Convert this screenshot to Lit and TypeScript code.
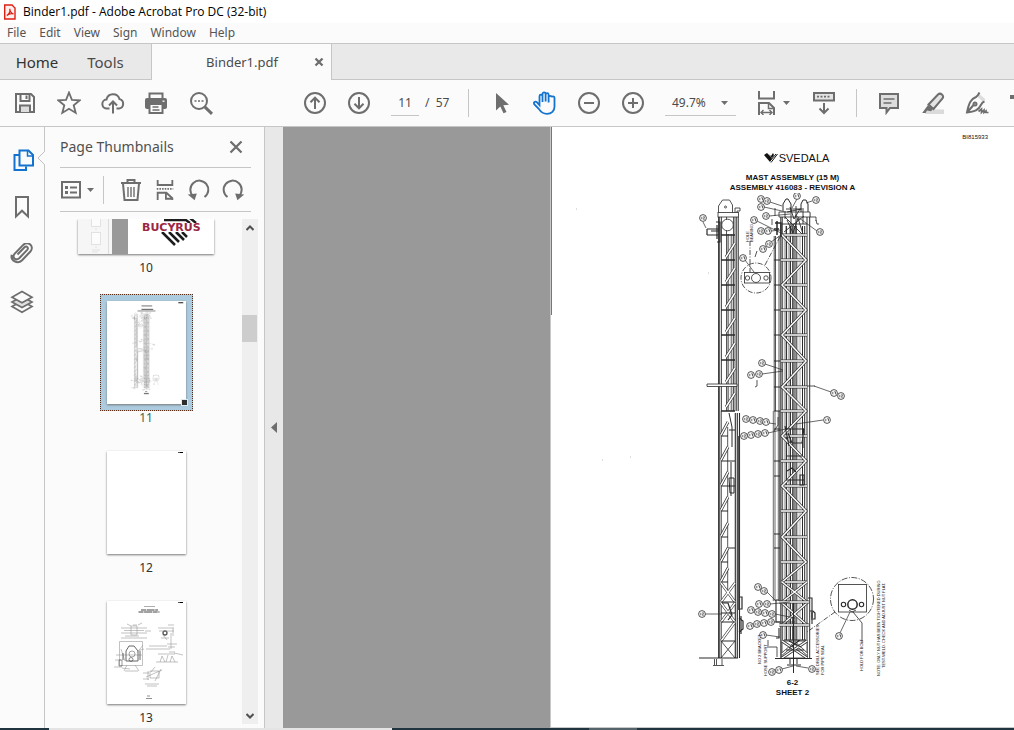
import { LitElement, html, svg, css } from "lit";
import { customElement, property } from "lit/decorators.js";

type Pt = [number, number];

/* ---------- icons ---------- */

const ICONS: Record<string, unknown> = {
  save: svg`<path d="M3 3h15l3 3v15H3z"/><path d="M7.500 3.500v6.500h9V3.500" /><path d="M13.500 4.500v3.500"/><path d="M7 21v-6.500h10V21" fill="#dcdcdc"/>`,
  star: svg`<path d="M12 1.500l2.900 7.300 7.800.5-6 5 2 7.600L12 17.700l-6.700 4.200 2-7.600-6-5 7.800-.5z" stroke-width="1.800"/>`,
  cloud: svg`<path d="M8.500 17.500H6.200a4.500 4.500 0 0 1-.7-9 6.700 6.700 0 0 1 13-.4 4.800 4.800 0 0 1-.4 9.400h-2.600"/><path d="M12 22.500V11M8 14.500l4-4 4 4"/>`,
  print: svg`<path d="M4.500 7V2.500h13V7"/><rect x="0" y="7" width="22" height="11" rx="2" fill="#6e6e6e" stroke="none"/><rect x="4.500" y="13" width="13" height="9" fill="#fbfbfb"/><path d="M7.500 16h6M7.500 19h7" stroke-width="1.300"/><path d="M17.500 10.200h2" stroke="#fff" stroke-width="1.300"/>`,
  search: svg`<circle cx="10" cy="10" r="8"/><path d="M15.800 15.800l7.200 7" stroke-width="3"/><path d="M5.500 10h2M9 10h2M12.500 10h2" stroke-width="1.700"/>`,
  up: svg`<circle cx="12" cy="12" r="10"/><path d="M12 18V7M7.500 11.200L12 6.700l4.500 4.500"/>`,
  down: svg`<circle cx="12" cy="12" r="10"/><path d="M12 6v11M7.500 12.800l4.500 4.500 4.500-4.500"/>`,
  pointer: svg`<path d="M7 2v17.500l4.300-4 3.200 6.800 3-1.400-3.200-6.600 5.700-.5z" fill="#6e6e6e" stroke="none"/>`,
  hand: svg`<path d="M6.500 13V5.200a1.500 1.500 0 0 1 3 0V11M9.500 10V3a1.500 1.500 0 0 1 3.100 0v7M12.600 10.500V3.700a1.500 1.500 0 0 1 3 0v7.300M15.600 11.500V6.300a1.500 1.500 0 0 1 3 0 1.500 1.500 0 0 1 2.900.5v9c0 4-3 7-7.500 7-4 0-6-1.400-8-4.700L1.400 13.500c-1.300-2.200.8-3.700 2.600-2.200l2.500 2.900V6" stroke-width="1.800"/>`,
  minus: svg`<circle cx="12" cy="12" r="10"/><path d="M7 12h10"/>`,
  plus: svg`<circle cx="12" cy="12" r="10"/><path d="M7 12h10M12 7v10"/>`,
  fit: svg`<path d="M3 0v7.500h15V0M3 24V12h10l5 5v7"/><path d="M12.500 12v5.500H18" stroke-width="1.500"/><path d="M5.500 21.500h10M7.500 19L5 21.500 7.500 24M13.500 19l2.500 2.500-2.500 2.500" stroke-width="1.400"/>`,
  keys: svg`<rect x="2" y="2" width="20" height="7.500" fill="#e4e4e4"/><path d="M5 5.700h2M8.500 5.700h2M12 5.700h2M15.500 5.700h2" stroke-width="1.700"/><path d="M12 12v9M7.500 17.500L12 22l4.500-4.500"/>`,
  comment: svg`<path d="M3 3h18v14h-8l-3.500 4.500V17H3z" fill="#dedede"/><path d="M6.500 8h11M6.500 12h8" stroke-width="1.500"/>`,
  marker: svg`<path d="M7 18.500h16v4.500H4z" fill="#dadada" stroke="none"/><path d="M7.500 13.500L17 3.500c2.500-2.200 6.500.8 4.500 4L12.500 18z" fill="#e4e4e4"/><path d="M7 14l5 4-2 2.200-4-.6-1.300 2.300H1.200z" fill="#6e6e6e" stroke="none"/>`,
  sign: svg`<path d="M14.500 3l6 5.500L18 11l-5-5z" fill="#dcdcdc" stroke="none"/><path d="M14.500 1.500c-1 2-2 3.700-3.500 4.500C6 8 4 11.500 2 21.500c7.500-.6 11.500-2 14.500-8.500.5-1.200 1.500-2 3-2.500M2.500 21l6-7"/><circle cx="10" cy="13" r="1.500"/><path d="M13.500 20.500l3-2.500v3.500l2.500-2.500v2.500l2-1.500v1.500h2.500" stroke-width="1.700"/>`,
  extra: svg`<path d="M6 2h9v6H1V4h5zM5 11h12v10H5z" fill="#6e6e6e" stroke="none"/>`,
  pages: svg`<path d="M13.500 1.500h5L23 6v10.500H9.500v-15z"/><path d="M17.500 2v5H23" stroke-width="1.500"/><path d="M9 6H4.500v15H16v-3.500"/>`,
  bookmark: svg`<path d="M6 1h12v19.500l-6-5.800-6 5.800z"/>`,
  clip: svg`<path d="M7.500 12.500l7-7.200c2.200-2 4.500.6 2.700 2.600l-8 8.300c-3.500 3-7.500-.8-4.700-4.300l8.700-9c5-4.500 11.500 1.500 7.200 6.600l-8.300 8.700c-4.500 4.300-12 .5-10.300-5.500" transform="translate(0 -1)"/>`,
  layers: svg`<path d="M12 11l10 5.500-10 5.700-10-5.700z" fill="#fbfbfb" stroke-width="1.700"/><path d="M12 6.500L22 12l-10 5.500L2 12z" fill="#e0e0e0" stroke-width="1.700"/><path d="M12 1.500L22 7.200l-10 5.600L2 7.200z" fill="#fbfbfb" stroke-width="1.700"/>`,
  close: svg`<path d="M6 6l12 12M18 6L6 18" stroke-width="2.500"/>`,
  closeBold: svg`<path d="M6 6l12 12M18 6L6 18" stroke-width="4"/>`,
  options: svg`<rect x="2" y="4" width="18" height="15.500"/><rect x="5" y="8" width="3" height="3" fill="#6e6e6e" stroke="none"/><rect x="5" y="13" width="3" height="3" fill="#6e6e6e" stroke="none"/><path d="M10 9.500h7M10 14.500h7" stroke-width="1.800"/>`,
  trash: svg`<path d="M2 5h20M8.500 4.500V2h7v2.500M4 5.500l1.500 16.500h13L20 5.500"/><path d="M9 9v10M12 9v10M15 9v10" stroke-width="1.400"/>`,
  split: svg`<path d="M4 1v5.500h16V1M4 23v-8h9.500l6.500 6V23M13 15v6.500h6.500"/><path d="M3 10.800h18" stroke-width="1.700" stroke-dasharray="1.700 1.200"/>`,
  undo: svg`<path d="M6 18A9 9 0 1 1 17.500 19"/><path d="M.8 16.500l9-1-2.200 6.700z" fill="#6e6e6e" stroke="none"/>`,
  redo: svg`<path d="M18 18A9 9 0 1 0 6.500 19"/><path d="M23.200 16.500l-9-1 2.200 6.700z" fill="#6e6e6e" stroke="none"/>`,
};

@customElement("ui-icon")
export class UiIcon extends LitElement {
  @property() name = "";
  @property({ type: Number }) size = 24;
  static styles = css`
    :host { display: inline-flex; }
    svg { fill: none; stroke: currentColor; stroke-width: 2; display: block; }
  `;
  render() {
    return html`<svg width=${this.size} height=${this.size} viewBox="0 0 24 24" aria-hidden="true">${ICONS[this.name]}</svg>`;
  }
}

/* ---------- mast drawing ---------- */

const seg = (a: Pt, b: Pt) => `M${a[0]} ${a[1]}L${b[0]} ${b[1]}`;
const vline = (xs: number[], y1: number, y2: number) => xs.map((x) => seg([x, y1], [x, y2])).join("");
const hline = (ys: number[], x1: number, x2: number) => ys.map((y) => seg([x1, y], [x2, y])).join("");
const strut = (d: string) =>
  svg`<path d=${d} stroke="#333" stroke-width="2.800"/><path d=${d} stroke="#fff" stroke-width="1.500"/>`;

const LEVELS = [235, 260, 285, 310, 335, 361, 387, 411, 436, 461, 486, 511, 537, 562, 582];
const zigzag = LEVELS.map((y, i) => `${i ? "L" : "M"}${i % 2 ? 806 : 782} ${y}`).join("");

const leftBraces =
  [260, 285, 310, 335, 360, 385, 410].map((y) => seg([726, y - 3], [735, y - 17])).join("") +
  [436, 461, 486, 511, 537, 562, 582].map((y) => seg([721, y - 1], [728, y - 14])).join("");

const BUBBLES: Pt[] = [
  [703, 218], [761, 199], [767, 201], [797, 196], [816, 200], [761, 207], [766, 216], [754, 220],
  [761, 231], [768, 231], [820, 232], [763, 249], [769, 244], [743, 258], [762, 363], [751, 375],
  [759, 374], [834, 393], [841, 396], [827, 420], [746, 419], [753, 420], [760, 421], [766, 422],
  [744, 436], [751, 435], [758, 434], [765, 433], [702, 614], [758, 587], [764, 591], [759, 604],
  [767, 604], [751, 610], [758, 612], [765, 613], [772, 614], [750, 626], [757, 624], [764, 623],
  [771, 622], [763, 635], [772, 672], [779, 670], [812, 669], [839, 636],
];

const LEADERS: [Pt, Pt][] = [
  [[703, 222], [706, 228]], [[770, 202], [782, 206]], [[797, 199], [792, 208]], [[812, 201], [806, 203]],
  [[764, 207], [782, 211]], [[769, 216], [790, 214]], [[757, 221], [781, 233]], [[771, 231], [781, 230]],
  [[817, 231], [795, 215]], [[771, 242], [781, 235]], [[745, 260], [754, 272]], [[765, 364], [783, 370]],
  [[762, 374], [783, 371]], [[831, 392], [814, 386]], [[823, 420], [796, 424]], [[769, 423], [776, 424]],
  [[768, 433], [790, 428]], [[705, 614], [722, 614]], [[767, 592], [776, 601]], [[770, 604], [790, 602]],
  [[775, 614], [795, 618]], [[774, 622], [795, 622]], [[766, 635], [780, 637]], [[782, 669], [793, 666]],
  [[808, 668], [796, 666]], [[840, 633], [850, 612]],
];

const bubble = ([x, y]: Pt, i: number) =>
  svg`<circle cx=${x} cy=${y} r="3.400" fill="#fff"/><path d=${`M${x - 1.200} ${y - 1.200}v2.500M${x + 0.200} ${y - 1.200}h1.300${i % 2 ? "v2.500" : "l-1 2.500h1.200"}`} stroke-width=".7"/>`;

const mast = () => svg`
  <g fill="none" stroke="#2a2a2a" stroke-width=".8">
    <!-- side elevation -->
    <path d="M718.500 213v-7l4-6h7l3 5v8M735 217v-9h5v3h-3v6" fill="#fff"/>
    <circle cx="725.500" cy="207" r="1"/>
    <rect x="718" y="212.500" width="20.500" height="4.500" fill="#fff"/>
    <path d=${vline([718.5, 719.7], 217, 658)} stroke-width=".9"/>
    <path d=${vline([736.7, 738.3], 217, 411)} stroke-width=".9"/>
    <path d=${vline([721.5, 726.5, 733.5, 735], 217, 411)}/>
    <path d=${vline([728.2, 731.5], 234, 411)} stroke="#888" stroke-width="1.800"/>
    <circle cx="727.500" cy="225" r="5.800" fill="#fff"/>
    <path d="M707 229h12M707 235h12M707 229v6M711 231h8M716 222h4v20h-3M717 225v14" stroke-width="1.200"/>
    <path d=${hline([235, 260, 285, 310, 335, 360, 385, 411], 721, 735)} stroke-width="1.300"/>
    <path d=${vline([721.3], 411, 658)}/>
    <path d=${vline([727.7], 427, 590)}/>
    <path d=${vline([735.3, 737.3, 739.5], 413, 658)} stroke-width="1.100"/>
    <path d="M738.200 436V610" stroke="#555" stroke-width="2"/>
    <path d=${hline([436, 461, 486, 511, 537, 562, 582], 721, 728)} stroke-width="1.200"/>
    <path d="M728 461h7M728 486h7M728 548h7M729 413l3 14v20M731 462v34M729 430h6M729 478h5v15h-4z" stroke-width="1"/>
    ${strut(leftBraces)}
    <path d="M707 384h30v2.500h-30z" fill="#fff"/>
    ${strut("M721 583L735 602M735 583L721 602M721 603L735 622M735 603L721 622M721 641L735 622")}
    <path d="M721 602h14M721 613h14M721 622h14M721 641h14" stroke-width="1.200"/>
    <path d="M721 641l14 17M735 641l-14 17" />
    <path d="M739 597h3v12h-3M739 618l4 3v8l-4 3M741 616v18" stroke-width="1.200"/>
    <path d="M699 658h39" stroke-width="1.200"/><path d="M714.500 659v6M722 659v6M716.500 659v6M713 665.500h11" />
    <path d="M722 603h6l4 12-4 5" stroke-width="1.200"/>

    <!-- front elevation -->
    <path d="M783 213v-9l3-5h2l3 5v9M801 213v-9l2-4h3l2 4v9" fill="#fff" stroke-width="1"/>
    <path d=${vline([774.2, 775.5, 779], 236, 411)}/>
    <path d=${vline([773.3, 775, 778.3, 779.5], 411, 601)} stroke-width=".7"/>
    <path d=${hline([260, 285, 310, 335, 361, 387, 411, 429, 461, 476, 534, 548], 774, 780)} stroke-width="1"/>
    <path d=${vline([780.8, 782.2, 807, 809.7], 213, 658)} stroke-width="1"/>
    <path d=${vline([786.3, 790.3], 226, 640)} stroke-width="1.300"/>
    <path d=${vline([784.3, 788.3, 797.8, 800], 235, 640)} stroke="#888" stroke-width=".7"/>
    <path d=${vline([794.3], 226, 640)} stroke="#888" stroke-width="2.500"/>
    <path d=${vline([792.7, 796.2, 802.5, 804.7], 226, 640)} stroke-width="1"/>
    <path d="M779 212h31v5h-31z" fill="#fff"/>
    <path d="M786 209h18M787 212l14-3M790 207l4 12 6-10M784 232l20-16M785 217l18 18M787 220l6 13 5-15 5 16M782 224h25M796 206v28M785 211v8M791 210v24M803 210v14" stroke-width=".9"/>
    ${strut(hline(LEVELS, 781, 807))}
    ${strut(zigzag)}
    <path d="M786 429h18M788 433l4 10h10l2-14M786 456h17M786 480h18M785 426l4 20M803 428v20M787 471l5-3 4 4M800 475h4v10h-4z" stroke-width="1.100"/>
    ${strut("M782 582L807 602M807 582L782 602M782 603L807 625M807 603L782 625")}
    ${strut(hline([602, 625], 779, 809))}
    <rect x="782" y="641" width="25" height="17" fill="#fff"/>
    ${strut("M782 641L807 658M807 641L782 658M782 654L795 643L807 654")}
    <path d="M784 640h22M789 641l12 6M800 640l-11 8M786 650h18M779 600h-3v22h4M779 628v10h-3M808 598h4v26" stroke-width="1.100"/>
    <path d="M810 611h3l2 2v6h-4M812 612v6" stroke-width="1.200"/>
    <path d="M775 658.500h37" stroke-width="1.200"/><path d="M790 659v5M797 659v5M787 665h14M793.500 603v70" stroke-width="1"/>
    <path d="M807 386h8M816 220l1 4h2" /><path d="M777 221v14M775 223h6v14M774 229h5" stroke-width="1.500"/>
    <path d="M810 217h6v4M775 208v8M772 219v6M778 417v8l-4 6" />

    <!-- details -->
    <circle cx="756" cy="278" r="15" stroke-dasharray="5 1.500 1 1.500" fill="#fff"/>
    <rect x="744.500" y="272.500" width="25" height="10.500"/>
    <circle cx="756" cy="278" r="4.500" fill="#fff"/>
    <circle cx="747.500" cy="278" r="2.200"/><circle cx="766" cy="278" r="2.200"/>
    <path d="M750 241v31M765 265l16-30M835 612l-28 20" stroke-dasharray="5 1.500 1 1.500"/>
    <circle cx="852" cy="599" r="21.500" stroke-dasharray="6 1.500 1 1.500"/>
    <rect x="838.500" y="584.500" width="28" height="27.500"/>
    <circle cx="852.500" cy="604.500" r="4.700" stroke-width="1.500"/>
    <path d="M849 610l3 2 4-2M853 612l9 11v20"/>
    <circle cx="843.500" cy="604.500" r="2.200" stroke-width="1.100"/><circle cx="861.500" cy="604.500" r="2.200" stroke-width="1.100"/>
    <path d=${LEADERS.map(([a, b]) => seg(a, b)).join("")} stroke-width=".7"/>
    ${BUBBLES.map(bubble)}
    <path d="M757 251l-2 6M757 380v6l-2 1M768 640v6M767 647h10v10" />
  </g>
  <g class="notes">
    <text transform="translate(880 676) rotate(-90)">NOTE: ONLY NUT HAS BEEN TIGHTENED DURING</text>
    <text transform="translate(885 668) rotate(-90)">TEST-WELD. CHECK AND ADJUST NUT FLAT.</text>
    <text transform="translate(863 671) rotate(-90)">HOLD FOR BOLT</text>
    <text transform="translate(819 675) rotate(-90)">SEE DRILL ACCESSORIES</text>
    <text transform="translate(824 675) rotate(-90)">FOR PIPE SEAL</text>
    <text transform="translate(761 664) rotate(-90)">NO 2 BRACKET</text>
    <text transform="translate(767 676) rotate(-90)">HOSE SUPPORT</text>
    <text transform="translate(749 242) rotate(-90)">HOLE</text>
    <text transform="translate(753 242) rotate(-90)">BEARING</text>
  </g>`;

/* ---------- small page pictures ---------- */

const tag = svg`<rect x="71" y="1" width="2" height="1" fill="#555"/><rect x="73" y="1" width="3" height="1" fill="#000"/>`;

const thumbTen = html`<svg width="136" height="35" viewBox="0 0 136 35">
  <rect width="34" height="36" fill="#f6f6f6"/>
  <g fill="#fcfcfc" stroke="#e2e2e2"><rect x="13.500" y="-2.500" width="9" height="10"/><rect x="13.500" y="13.500" width="9" height="12"/><path d="M14 31h8M14 33h6M17 10h2M17 28h2"/></g>
  <rect x="30" width="1" height="36" fill="#ddd"/>
  <rect x="34" width="16" height="36" fill="#999"/>
  <g stroke="#1c1c1c" stroke-width="2.500"><path d="M86 1h22M105 -1l7 5M112 -1l6 5"/><path d="M84 13l13 13M91 13l10 10M98 13l8 8M104 13l5 5"/></g>
  <rect x="64" y="4" width="60" height="9" fill="#fff"/>
  <text class="brand" x="64" y="12">BUCYRUS</text>
</svg>`;

const thumbEleven = html`<svg width="79" height="103" viewBox="551 127 484 631">
  <g fill="#333"><rect x="762" y="152" width="66" height="10" fill="#aaa"/><rect x="762" y="175" width="72" height="6" fill="#555"/><rect x="738" y="185" width="110" height="6" fill="#888"/><rect x="988" y="134" width="30" height="7"/><rect x="784" y="680" width="14" height="5" fill="#888"/><rect x="777" y="690" width="30" height="8" fill="#777"/></g>
  <g opacity=".6">${mast()}</g>
</svg>`;

const thumbTwelve = html`<svg width="79" height="103" viewBox="0 0 79 103">${tag}</svg>`;

const thumbThirteen = html`<svg width="79" height="103" viewBox="0 0 79 103">${tag}
  <g fill="none" stroke="#999" stroke-width=".6">
    <path d="M37 5.500h11" stroke="#777"/><path d="M34 9h17M31.500 11h21" stroke="#444" stroke-width="1" stroke-dasharray="5 .6 8 .6"/>
    <path d="M14 27h26M14 32h26M17 29.500h20M24 25h6v9h-6zM26 24h4M20 23l4 2M31 24l4-2M38 30h6M14 37h26M18 35h14"/>
    <circle cx="58" cy="32" r="2" stroke="#555" stroke-width="1.300"/><path d="M51 27h16M52 30h15M61 24h6M54 37h8M64 32v16M60 43h10M61 46h7M56 34l4 5M66 27v8M62 51h6"/>
    <path d="M12.500 40.500h23v24h-23zM9 54h26M14 48l4 12M8 59h6M7 66h8"/>
    <path d="M19 50l3-5h5l4 5v10h-12zM16 52v7M33 50v9" stroke="#666" stroke-width="1"/><circle cx="25" cy="53" r="3" stroke="#666"/><circle cx="24" cy="58.500" r="2" stroke="#444"/>
    <path d="M12 59h3v6h-3z" stroke="#555"/><path d="M20 64l-3 6M28 64l4 6M18 70h13M15 67l8 1"/>
    <path d="M39 48h24M42 45h18M36 44l-6 8M30 50l7-2"/>
    <path d="M51 53h17M53 61l2-6 3 6M63 61l2-6 3 6M61 54l-2 7M49 61h22M67 52l9 2"/>
    <path d="M41 70v9M43 70h9v7h-9zM39 76l16-7M36 72h6M48 66l-4 5M54 68l-6 12M38 83h14M40 85h10M36 78h6"/>
    <path d="M40 95h3M39 97.500h6" stroke="#444"/>
  </g>
</svg>`;

const caret = html`<svg class="caret" width="7" height="4" viewBox="0 0 7 4" aria-hidden="true"><path d="M0 0h7L3.500 4z" fill="#6e6e6e"/></svg>`;

@customElement("app-root")
export class AppRoot extends LitElement {
  static styles = css`
    :host {
      display: flex; flex-direction: column; height: 100vh; min-height: 480px; overflow: hidden;
      font: 12px/20px "Noto Sans", "Open Sans", sans-serif; color: #4b4b4b; background: #fbfbfb;
    }
    * { box-sizing: border-box; }
    button, input, select { font: inherit; color: inherit; background: none; border: 0; padding: 0; margin: 0; }
    button { display: inline-flex; align-items: center; justify-content: center; cursor: pointer; }
    .title { display: flex; align-items: center; gap: 7px; height: 23px; flex: none; padding-left: 4px; background: #fff; color: #000; }
    .title h1 { font: inherit; font-family: "Open Sans", sans-serif; margin: 0; }
    .menu { display: flex; gap: 13px; height: 20px; flex: none; padding-left: 7px; color: #555; }
    .tabs { display: flex; height: 37px; flex: none; background: #e9e9e9; border: 1px solid #c6c6c6; border-width: 1px 0; font-size: 15px; }
    .home { width: 74px; color: #323232; }
    .toolsTab { width: 77px; padding-right: 14px; }
    .doc { display: flex; align-items: center; justify-content: flex-end; gap: 34px; width: 181px; padding-right: 5px; margin-bottom: -1px; background: #fbfbfb; border: 1px solid #c6c6c6; border-width: 0 1px; font-size: 13px; }
    .doc button { width: 14px; height: 20px; color: #6e6e6e; }
    .bar { display: flex; align-items: center; height: 47px; flex: none; padding-left: 3px; border-bottom: 1px solid #c6c6c6; color: #6e6e6e; overflow: hidden; }
    .bar > button { flex: none; width: 44px; height: 44px; }
    .bar .nav { margin-left: 70px; }
    .bar .blue { color: #1473cf; }
    .count { display: flex; gap: 6px; margin-left: 10px; color: #4b4b4b; flex: none; width: 67px; }
    .count input { width: 28px; height: 26px; text-align: center; border-bottom: 1px solid #c6c6c6; }
    .count span { line-height: 26px; white-space: pre; }
    .sep { flex: none; width: 1px; height: 28px; background: #c6c6c6; margin: 0 10px; }
    .zoom { position: relative; display: flex; align-items: center; flex: none; width: 71px; margin: 0 10px 0 10px; color: #4b4b4b; }
    .zoom select { width: 100%; height: 26px; padding-left: 7px; appearance: none; border-bottom: 1px solid #c6c6c6; border-radius: 0; }
    .zoom .caret { position: absolute; right: 8px; pointer-events: none; }
    .bar .fit { gap: 3px; width: 50px; margin: 0 4px 0 2px; }
    .main { display: flex; flex: 1; min-height: 0; }
    .rail { display: flex; flex-direction: column; width: 45px; padding-top: 10px; border-right: 1px solid #c6c6c6; color: #6e6e6e; flex: none; }
    .rail button { position: relative; width: 44px; height: 47px; }
    .rail .active { color: #1473cf; }
    .notch { position: absolute; right: -1px; top: 14px; }
    .panel { display: flex; flex-direction: column; width: 220px; flex: none; border-right: 1px solid #c6c6c6; color: #6e6e6e; }
    .head, .tools { display: flex; align-items: center; margin: 0 13px 0 15px; border-bottom: 1px solid #c6c6c6; flex: none; }
    .head { height: 41px; justify-content: space-between; color: #505050; }
    .head h2 { font-size: 14px; font-weight: 400; margin: 0; }
    .head button { width: 30px; height: 30px; color: #6e6e6e; }
    .tools { height: 44px; }
    .tools button { width: 34px; height: 34px; }
    .tools .opt { gap: 3px; width: 36px; justify-content: flex-start; }
    .tools .sep { margin: 0 10px 0 7px; }
    .scroller { display: flex; flex: 1; min-height: 0; margin: 7px 6px 0 0; }
    .list { flex: 1; overflow: hidden; list-style: none; margin: 0; padding: 0 0 0 5px; }
    .list li { display: flex; flex-direction: column; align-items: center; margin-bottom: 19px; color: #323232; }
    .frame { padding: 6px; border: 1px solid transparent; }
    .list .first .frame { padding-top: 0; border-top: 0; }
    .pic { position: relative; background: #fff; box-shadow: 0 1px 2px #777; }
    .pic svg { display: block; overflow: hidden; }
    .chosen .frame { background: #accbdf; border: 1px dotted #5a2a14; }
    .chosen .num { color: #3c6650; }
    .grip { position: absolute; right: -2px; bottom: -2px; width: 7px; height: 7px; background: #2d2d2d; border: 1px solid #dde9f0; }
    .num { line-height: 14px; }
    .brand { font: bold 11px "DejaVu Sans", sans-serif; fill: #9b2743; }
    .notes { font: 4px "Liberation Sans", sans-serif; fill: #222; }
    .track { display: flex; flex-direction: column; width: 16px; margin-bottom: 4px; background: #efefef; flex: none; }
    .track button { height: 17px; }
    .thumb { height: 27px; width: 15px; margin-top: 79px; margin-bottom: auto; background: #cdcdcd; }
    .split { width: 18px; flex: none; background: #e8e8e8; }
    .view { display: flex; flex: 1; min-width: 0; background: #999; overflow: hidden; }
    .sheet { width: 484px; flex: none; margin-left: 267px; border-left: 1px solid #c8c8c8; border-bottom: 1px solid #c8c8c8; padding-top: 5px; background: linear-gradient(#777, #777) 0 0 / 1px 188px no-repeat #fff; color: #111; font: bold 8px/10px "Liberation Sans", sans-serif; text-align: center; }
    .sheet p { margin: 0; }
    .sheet .code { font-size: 6px; font-weight: 400; text-align: right; padding-right: 46px; margin-bottom: 8px; }
    .sheet .logo { display: flex; justify-content: center; align-items: center; gap: 1px; height: 16px; margin-bottom: 7px; padding-left: 8px; font-size: 11px; font-weight: 400; }
    .draw { display: block; }
    .bottom { display: flex; height: 2px; flex: none; background: #20343f; }
    .lit { width: 343px; margin-left: 49px; background: #e4e4e4; }
    .dim { width: 48px; margin-left: 197px; background: #55636b; }
  `;

  private btn(name: string, label: string, cls = "", size = 24) {
    return html`<button class=${cls} aria-label=${label}><ui-icon name=${name} .size=${size}></ui-icon></button>`;
  }

  private item(num: number, pic: unknown, cls = "") {
    return html`<li class=${cls}>
      <div class="frame"><div class="pic">${pic}${cls === "chosen" ? html`<i class="grip"></i>` : ""}</div></div>
      <span class="num">${num}</span>
    </li>`;
  }

  render() {
    return html`
      <header class="title">
        <svg width="12" height="16" viewBox="0 0 12 16" aria-hidden="true"><path d="M1.500 1h6.500l3 3v11H.7V1z" fill="#fff0ee" stroke="#dd1f14" stroke-width="1.400"/><path d="M2.800 11.500C5 10 6.300 7 5.800 4.800 6 8 7.500 9.500 9.500 9.800 7 9.300 4.500 10 2.800 11.500z" fill="none" stroke="#dd1f14" stroke-width="1.200"/></svg>
        <h1>Binder1.pdf - Adobe Acrobat Pro DC (32-bit)</h1>
      </header>
      <nav class="menu" aria-label="Menu">${["File", "Edit", "View", "Sign", "Window", "Help"].map((m) => html`<button>${m}</button>`)}</nav>
      <nav class="tabs" aria-label="Tabs">
        <button class="home">Home</button><button class="toolsTab">Tools</button>
        <div class="doc"><span>Binder1.pdf</span>${this.btn("closeBold", "Close tab", "", 14)}</div>
      </nav>
      <div class="bar" role="toolbar">
        ${this.btn("save", "Save")}${this.btn("star", "Star")}${this.btn("cloud", "Upload")}${this.btn("print", "Print")}${this.btn("search", "Find")}
        ${this.btn("up", "Previous page", "nav")}${this.btn("down", "Next page")}
        <div class="count"><input aria-label="Page number" value="11" /><span>/  57</span></div>
        <i class="sep"></i>
        ${this.btn("pointer", "Select")}${this.btn("hand", "Pan", "blue")}${this.btn("minus", "Zoom out")}${this.btn("plus", "Zoom in")}
        <div class="zoom"><select aria-label="Zoom"><option>49.7%</option></select>${caret}</div>
        <button class="fit" aria-label="Fit width"><ui-icon name="fit"></ui-icon>${caret}</button>
        ${this.btn("keys", "Page display")}
        <i class="sep"></i>
        ${this.btn("comment", "Comment")}${this.btn("marker", "Highlight")}${this.btn("sign", "Sign")}${this.btn("extra", "More tools")}
      </div>
      <main class="main">
        <nav class="rail" aria-label="Panels">
          <button class="active" aria-label="Page thumbnails"><ui-icon name="pages"></ui-icon>
            <svg class="notch" width="8" height="14" viewBox="0 0 8 14"><path d="M8 0L1 7l7 7z" fill="#fbfbfb"/><path d="M7.500 0v.5L1 7l6.500 6.500v.5" fill="none" stroke="#c0c0c0"/></svg>
          </button>
          ${this.btn("bookmark", "Bookmarks")}${this.btn("clip", "Attachments")}${this.btn("layers", "Layers")}
        </nav>
        <section class="panel">
          <div class="head"><h2>Page Thumbnails</h2>${this.btn("close", "Close panel", "", 22)}</div>
          <div class="tools">
            <button class="opt" aria-label="Options"><ui-icon name="options"></ui-icon>${caret}</button>
            <i class="sep"></i>
            ${this.btn("trash", "Delete")}${this.btn("split", "Split", "", 22)}${this.btn("undo", "Rotate left")}${this.btn("redo", "Rotate right")}
          </div>
          <div class="scroller">
            <ul class="list">
              ${this.item(10, thumbTen, "first")}${this.item(11, thumbEleven, "chosen")}${this.item(12, thumbTwelve)}${this.item(13, thumbThirteen)}
            </ul>
            <div class="track">
              <button aria-label="Scroll up"><svg width="8" height="6" viewBox="0 0 8 6"><path d="M.5 5L4 1.500 7.500 5" fill="none" stroke="#505050" stroke-width="2"/></svg></button>
              <div class="thumb"></div>
              <button aria-label="Scroll down"><svg width="8" height="6" viewBox="0 0 8 6"><path d="M.5 1L4 4.500 7.500 1" fill="none" stroke="#505050" stroke-width="2"/></svg></button>
            </div>
          </div>
        </section>
        <button class="split" aria-label="Collapse panel"><svg width="6" height="11" viewBox="0 0 6 11"><path d="M6 0v11L0 5.500z" fill="#6e6e6e"/></svg></button>
        <section class="view">
          <article class="sheet">
            <p class="code">BI815933</p>
            <p class="logo"><svg width="14" height="10" viewBox="0 0 14 10" aria-hidden="true"><path d="M0 2l3-2 5 5-2 4z" fill="#111"/><path d="M5 1l2 2 2-3 1 2-2 3z" fill="#111"/><path d="M7 9.500L13.500 1M6 8l6-7" stroke="#111"/></svg>SVEDALA</p>
            <p>MAST ASSEMBLY (15 M)</p>
            <p>ASSEMBLY 416083 - REVISION A</p>
            <svg class="draw" width="483" height="485" viewBox="551 193 483 485" role="img" aria-label="Mast assembly drawing">
              <path d="M576 209h1M708 273h1M602 460h1M630 457h1" stroke="#bbb"/>
              ${mast()}
            </svg>
            <p>6-2</p>
            <p>SHEET 2</p>
          </article>
        </section>
      </main>
      <footer class="bottom"><i class="lit"></i><i class="dim"></i></footer>
    `;
  }
}
